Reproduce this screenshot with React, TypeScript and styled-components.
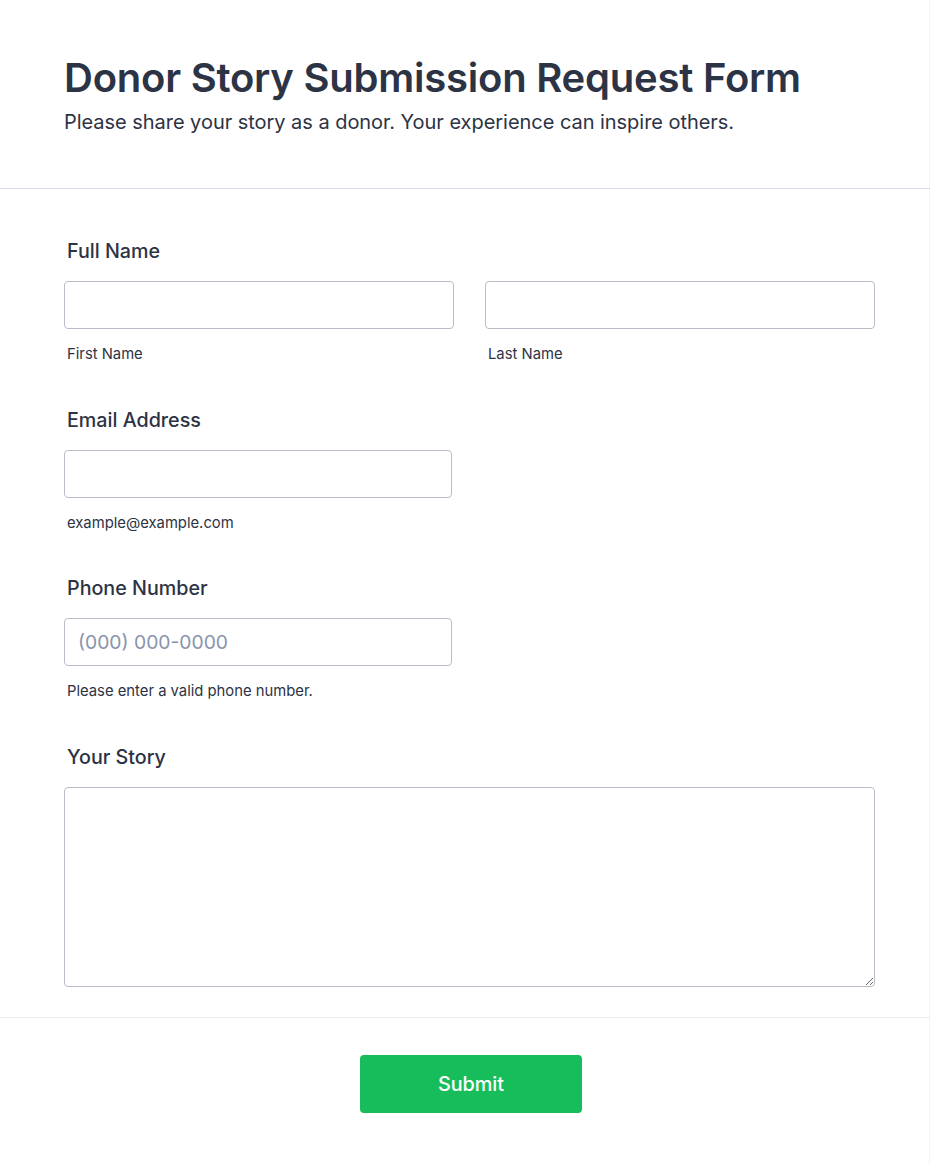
import React from "react";
import styled, { createGlobalStyle } from "styled-components";

const GlobalStyle = createGlobalStyle`
  html, body { margin: 0; padding: 0; background: #ffffff; }
  body { font-family: Inter, "Noto Sans", sans-serif; color: #2c3345; }
  * { box-sizing: border-box; }
`;

const Card = styled.div`
  width: 930px;
  min-height: 1164px;
  background: #ffffff;
  box-shadow: inset -1px 0 0 #f3f4f7;
  display: flex;
  flex-direction: column;
`;

const Header = styled.header`
  padding: 54px 64px 0 64px;
  height: 189px;
  border-bottom: 1px solid #d8dae6;
`;

const Title = styled.h1`
  margin: 0;
  font-size: 40px;
  line-height: 48px;
  font-weight: 600;
  letter-spacing: -0.23px;
  color: #2c3345;
`;

const Subtitle = styled.p`
  margin: 6px 0 0;
  font-size: 20px;
  line-height: 28px;
  font-weight: 400;
  letter-spacing: -0.04px;
  color: #2c3345;
`;

const Body = styled.div`
  padding: 50px 55px 30px 64px;
  display: flex;
  flex-direction: column;
  gap: 44.5px;
`;

const Field = styled.div`
  display: flex;
  flex-direction: column;
`;

const Label = styled.label`
  font-size: 19.7px;
  line-height: 24px;
  font-weight: 500;
  padding-left: 3px;
  margin-bottom: 18px;
  color: #2c3345;
`;

const Row = styled.div<{ $cols: number }>`
  display: grid;
  grid-template-columns: ${(p) => (p.$cols === 2 ? "1fr 1fr" : "388px")};
  column-gap: 31px;
`;

const Col = styled.div`
  display: flex;
  flex-direction: column;
`;

const Input = styled.input`
  height: 48px;
  width: 100%;
  border: 1px solid #b8bdc9;
  border-radius: 4px;
  padding: 0 13px;
  font-family: Inter, "Noto Sans", sans-serif;
  font-size: 19.3px;
  color: #2c3345;
  background: #ffffff;
  outline: none;
  &::placeholder { color: #8894ab; }
`;

const TextArea = styled.textarea`
  display: block;
  height: 200px;
  width: 100%;
  border: 1px solid #b8bdc9;
  border-radius: 4px;
  padding: 10px 13px;
  font-family: Inter, "Noto Sans", sans-serif;
  font-size: 18px;
  resize: vertical;
  background: #ffffff;
  outline: none;
`;

const Sub = styled.span`
  font-size: 14.8px;
  line-height: 18px;
  padding-left: 3px;
  margin-top: 16px;
  color: #2c3345;
`;

const Footer = styled.div`
  border-top: 1px solid #eaedf3;
  padding: 37px 0 0 12px;
  display: flex;
  justify-content: center;
`;

const SubmitButton = styled.button`
  width: 222px;
  height: 58px;
  border: none;
  border-radius: 4px;
  background: #18bd5b;
  color: #ffffff;
  font-family: Inter, "Noto Sans", sans-serif;
  font-size: 19.8px;
  font-weight: 500;
  cursor: pointer;
`;

export default function App() {
  return (
    <>
      <GlobalStyle />
      <Card>
        <Header>
          <Title>Donor Story Submission Request Form</Title>
          <Subtitle>Please share your story as a donor. Your experience can inspire others.</Subtitle>
        </Header>
        <Body>
          <Field>
            <Label>Full Name</Label>
            <Row $cols={2}>
              <Col>
                <Input type="text" />
                <Sub>First Name</Sub>
              </Col>
              <Col>
                <Input type="text" />
                <Sub>Last Name</Sub>
              </Col>
            </Row>
          </Field>
          <Field>
            <Label>Email Address</Label>
            <Row $cols={1}>
              <Col>
                <Input type="email" />
                <Sub>example@example.com</Sub>
              </Col>
            </Row>
          </Field>
          <Field>
            <Label>Phone Number</Label>
            <Row $cols={1}>
              <Col>
                <Input type="tel" placeholder="(000) 000-0000" />
                <Sub>Please enter a valid phone number.</Sub>
              </Col>
            </Row>
          </Field>
          <Field>
            <Label>Your Story</Label>
            <TextArea />
          </Field>
        </Body>
        <Footer>
          <SubmitButton type="button">Submit</SubmitButton>
        </Footer>
      </Card>
    </>
  );
}
